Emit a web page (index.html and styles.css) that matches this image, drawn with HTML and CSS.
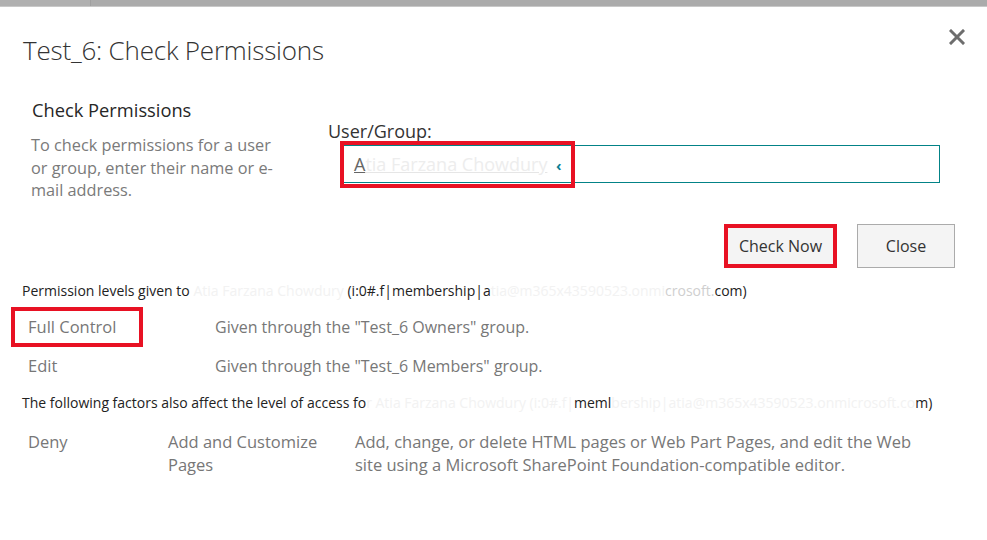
FILE: index.html
```html
<!DOCTYPE html>
<html lang="en">
<head>
<meta charset="utf-8">
<title>Test_6: Check Permissions</title>
<link rel="stylesheet" href="styles.css">
</head>
<body>
<div class="topbar"><span class="topbar-seg"></span></div>
<div class="dialog">
  <header class="dlg-head">
    <h1 class="dlg-title">Test_6: Check Permissions</h1>
    <button class="dlg-close" aria-label="Close">
      <svg width="16" height="16" viewBox="0 0 16 16"><path d="M2 2 L14 14 M14 2 L2 14" stroke="#6d6d6d" stroke-width="3" stroke-linecap="square"/></svg>
    </button>
  </header>

  <section class="form">
    <div class="form-info">
      <h2 class="info-title">Check Permissions</h2>
      <p class="info-desc">To check permissions for a user or group, enter their name or e-mail address.</p>
    </div>
    <div class="form-field">
      <label class="field-label">User/Group:</label>
      <div class="picker">
        <span class="picker-entity mark"><span class="ent-a">A</span><span class="ent-rest">tia Farzana Chowdury</span> <span class="ent-x">‹</span></span>
      </div>
    </div>
  </section>

  <div class="actions">
    <button class="btn mark">Check Now</button>
    <button class="btn">Close</button>
  </div>

  <section class="results">
    <p class="res-head">Permission levels given to <span class="faded">Atia Farzana Chowdury</span> (i:0#.f|membership|a<span class="faded">tia@m365x43590523.onmi</span><span class="semi">crosoft.</span>com)</p>
    <div class="perm-row">
      <span class="perm-name"><span class="mark mark-fc">Full Control</span></span>
      <span class="perm-desc">Given through the "Test_6 Owners" group.</span>
    </div>
    <div class="perm-row">
      <span class="perm-name">Edit</span>
      <span class="perm-desc">Given through the "Test_6 Members" group.</span>
    </div>
    <p class="res-head res-head2">The following factors also affect the level of access fo<span class="faded">r Atia Farzana Chowdury (i:0#.f|</span>meml<span class="faded">bership|atia@m365x43590523.onmicrosoft.co</span>m)</p>
    <div class="deny-row">
      <span class="deny-type">Deny</span>
      <span class="deny-perm">Add and Customize Pages</span>
      <span class="deny-desc">Add, change, or delete HTML pages or Web Part Pages, and edit the Web site using a Microsoft SharePoint Foundation-compatible editor.</span>
    </div>
  </section>
</div>
</body>
</html>
```

FILE: styles.css
```css
* { box-sizing: border-box; }
html, body { margin: 0; padding: 0; background: #fff; }
body {
  font-family: "Open Sans", "Noto Sans", sans-serif;
  color: #333;
  width: 987px;
  height: 540px;
  overflow: hidden;
}
.topbar {
  height: 7px;
  background: #ababab;
  border-bottom: 1px solid #c8c8c8;
  display: flex;
}
.topbar-seg {
  width: 91px;
  height: 100%;
  background: #b0b0b0;
  border-right: 1px solid #a0a0a0;
}
.dialog { padding: 0 22px 0 22px; }
.dlg-head {
  display: flex;
  justify-content: space-between;
  align-items: flex-start;
  padding-top: 26px;
}
.dlg-title {
  margin: 0 0 0 1px;
  font-weight: 300;
  font-size: 26px;
  line-height: 34px;
  color: #333;
  letter-spacing: -0.2px;
}
.dlg-close {
  margin: -4px 0 0 0;
  padding: 0;
  border: 0;
  background: none;
  width: 16px;
  height: 16px;
  display: block;
}
.dlg-close svg { display: block; }

.form {
  display: grid;
  grid-template-columns: 296px 612px;
  margin-top: 31px;
}
.form-info { padding-left: 10px; }
.info-title {
  margin: 0;
  font-weight: 400;
  font-size: 18.3px;
  line-height: 24px;
  color: #262626;
}
.info-desc {
  margin: 12px 0 0 -1px;
  font-size: 16.3px;
  line-height: 22.5px;
  color: #7a7a7a;
  width: 250px;
}
.form-field { padding-top: 22px; padding-left: 10px; }
.field-label {
  display: block;
  font-size: 18px;
  line-height: 22px;
  color: #333;
}
.picker {
  margin: 3px 0 0 15px;
  width: 597px;
  height: 38px;
  border: 1px solid #038387;
  display: flex;
  align-items: center;
  padding-left: 8px;
}
.picker-entity {
  font-size: 18px;
  color: #ededed;
  position: relative;
  padding-left: 2px;
}
.ent-a { color: #666; text-decoration: underline; }
.ent-rest { text-decoration: underline; text-decoration-color: #e6e6e6; }
.ent-x { color: #0a7f94; font-weight: 700; font-size: 15px; margin-left: 4px; }
.mark { position: relative; }
.mark::after {
  content: "";
  position: absolute;
  border: 4px solid #e81123;
  pointer-events: none;
}
.picker-entity.mark::after { left: -12px; top: -11px; right: -13px; bottom: -12px; }

.actions {
  display: flex;
  justify-content: flex-end;
  gap: 23px;
  margin-top: 22px;
  margin-right: 10px;
}
.btn {
  font-family: inherit;
  font-size: 16px;
  color: #333;
  background: #f4f4f4;
  border: 1px solid #ababab;
  height: 44px;
  min-width: 98px;
  padding: 0 10px;
}
.btn.mark { border-color: #f4f4f4; min-width: 107px; }
.btn.mark::after { left: -4px; top: -1px; right: -4px; bottom: -1px; }

.results { margin-top: 14px; }
.res-head {
  margin: 0;
  font-size: 14px;
  line-height: 18px;
  color: #222;
  white-space: nowrap;
}
.faded { color: #f2f2f2; }
.semi { color: #cfcfcf; }
.perm-row {
  display: flex;
  font-size: 16px;
  line-height: 22px;
  color: #777;
  margin-top: 16px;
}
.perm-row + .perm-row { margin-top: 17px; }
.perm-name { width: 193px; padding-left: 6px; font-size: 16.5px; }
.mark-fc { display: inline-block; }
.mark-fc::after { left: -17px; top: -9px; right: -27px; bottom: -9px; }
.res-head2 { margin-top: 17px; }
.deny-row {
  display: grid;
  grid-template-columns: 146px 187px 570px;
  font-size: 16.5px;
  line-height: 23px;
  color: #777;
  margin-top: 18px;
}
.deny-type { padding-left: 6px; }
```
